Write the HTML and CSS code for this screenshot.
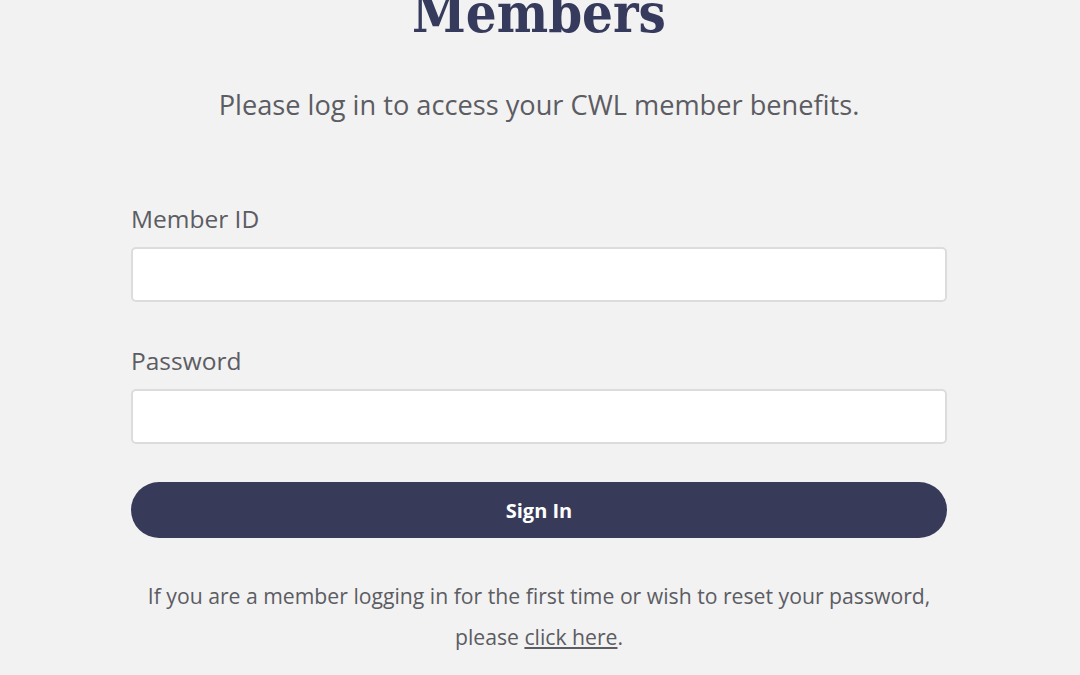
FILE: index.html
```html
<!DOCTYPE html>
<html lang="en">
<head>
<meta charset="utf-8">
<title>Members</title>
<link rel="stylesheet" href="styles.css">
</head>
<body>
<main class="page">
  <h1 class="title">Members</h1>
  <p class="intro">Please log in to access your CWL member benefits.</p>
  <form class="login">
    <label class="field">
      <span class="label">Member ID</span>
      <input class="input" type="text">
    </label>
    <label class="field">
      <span class="label">Password</span>
      <input class="input" type="password">
    </label>
    <button class="btn" type="button">Sign In</button>
  </form>
  <p class="note">If you are a member logging in for the first time or wish to reset your password,<br>please <a href="#" class="link">click here</a>.</p>
</main>
</body>
</html>
```
FILE: styles.css
```css
html, body {
  margin: 0;
  padding: 0;
  background: #f2f2f2;
}
body {
  font-family: "Open Sans", "Noto Sans", sans-serif;
  color: #5c5c63;
  height: 675px;
  overflow: hidden;
  padding-right: 2px;
}
.page {
  width: 816px;
  margin: 0 auto;
  display: flex;
  flex-direction: column;
}
.title {
  margin: -22px 0 0;
  font-family: "DejaVu Serif Condensed", "DejaVu Serif", serif;
  font-weight: bold;
  font-size: 54px;
  line-height: 70px;
  color: #363a5c;
  text-align: center;
}
.intro {
  margin: 38px 0 0;
  font-size: 27.2px;
  line-height: 38px;
  text-align: center;
}
.login {
  margin-top: 79px;
  display: flex;
  flex-direction: column;
}
.field {
  display: flex;
  flex-direction: column;
}
.field + .field {
  margin-top: 43px;
}
.label {
  font-size: 24.5px;
  line-height: 32px;
  margin-bottom: 12px;
}
.input {
  height: 55px;
  box-sizing: border-box;
  border: 2px solid #dcdcde;
  border-radius: 5px;
  background: #fff;
  margin: 0;
}
.btn {
  margin-top: 38px;
  height: 56px;
  border: 0;
  border-radius: 28px;
  background: #383a59;
  color: #fff;
  font-family: "Open Sans", sans-serif;
  font-weight: bold;
  font-size: 20px;
}
.note {
  margin: 37px 0 0;
  font-size: 21.2px;
  line-height: 41px;
  text-align: center;
}
.link {
  color: inherit;
}
```
